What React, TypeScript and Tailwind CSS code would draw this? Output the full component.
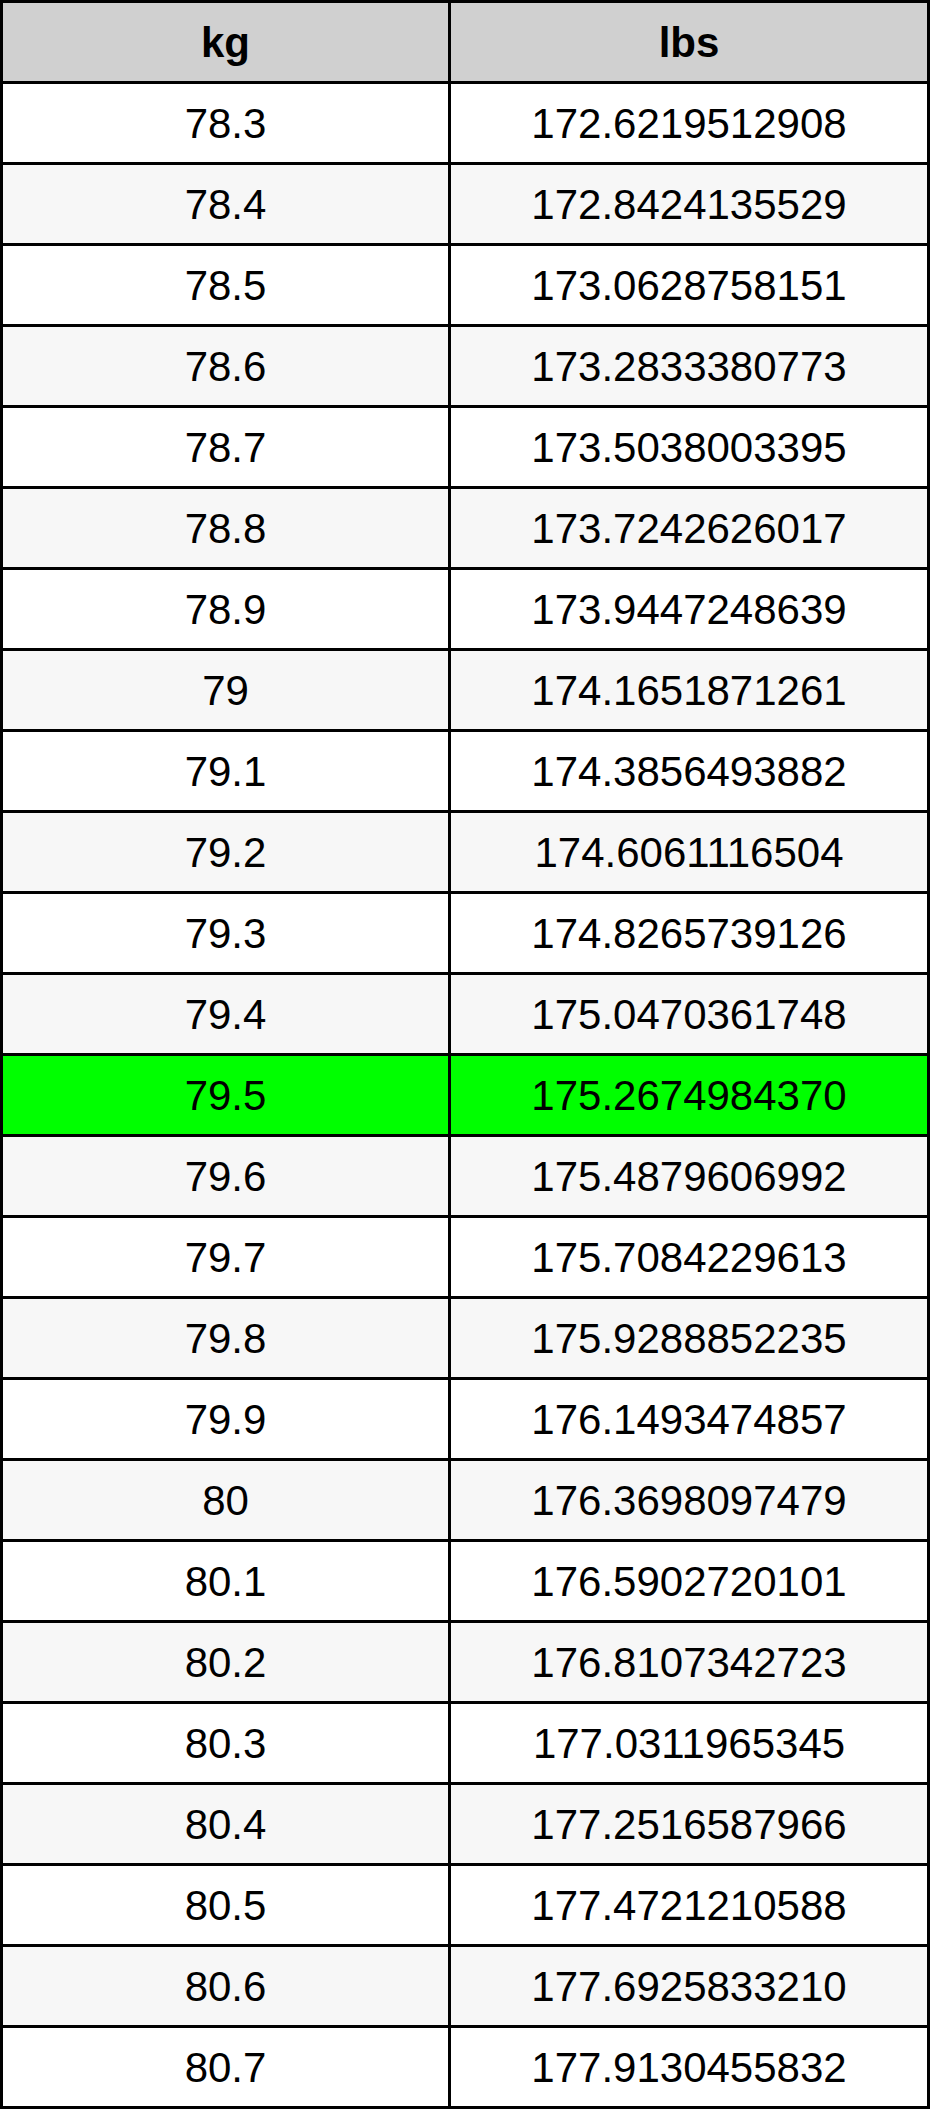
const rows: [string, string][] = [
  ["78.3", "172.6219512908"],
  ["78.4", "172.8424135529"],
  ["78.5", "173.0628758151"],
  ["78.6", "173.2833380773"],
  ["78.7", "173.5038003395"],
  ["78.8", "173.7242626017"],
  ["78.9", "173.9447248639"],
  ["79", "174.1651871261"],
  ["79.1", "174.3856493882"],
  ["79.2", "174.6061116504"],
  ["79.3", "174.8265739126"],
  ["79.4", "175.0470361748"],
  ["79.5", "175.2674984370"],
  ["79.6", "175.4879606992"],
  ["79.7", "175.7084229613"],
  ["79.8", "175.9288852235"],
  ["79.9", "176.1493474857"],
  ["80", "176.3698097479"],
  ["80.1", "176.5902720101"],
  ["80.2", "176.8107342723"],
  ["80.3", "177.0311965345"],
  ["80.4", "177.2516587966"],
  ["80.5", "177.4721210588"],
  ["80.6", "177.6925833210"],
  ["80.7", "177.9130455832"],
];

export default function App() {
  return (
    <main className="w-[930px] h-[2115px] bg-white font-['Liberation_Sans',Arial,sans-serif] text-black">
      {/* conversion table */}
      <div className="grid grid-cols-[445px_476px] auto-rows-[78px] gap-[3px] p-[3px] bg-black">
        <div className="flex items-center justify-center bg-[#d0d0d0] text-[42px] font-bold">kg</div>
        <div className="flex items-center justify-center bg-[#d0d0d0] text-[42px] font-bold">lbs</div>
        {rows.map(([kg, lbs], i) => {
          const bg = kg === "79.5" ? "bg-[#00ff00]" : i % 2 === 0 ? "bg-white" : "bg-[#f7f7f7]";
          return [
            <div key={kg + "a"} className={`flex items-center justify-center text-[42px] ${bg}`}>{kg}</div>,
            <div key={kg + "b"} className={`flex items-center justify-center text-[42px] ${bg}`}>{lbs}</div>,
          ];
        })}
      </div>
    </main>
  );
}
